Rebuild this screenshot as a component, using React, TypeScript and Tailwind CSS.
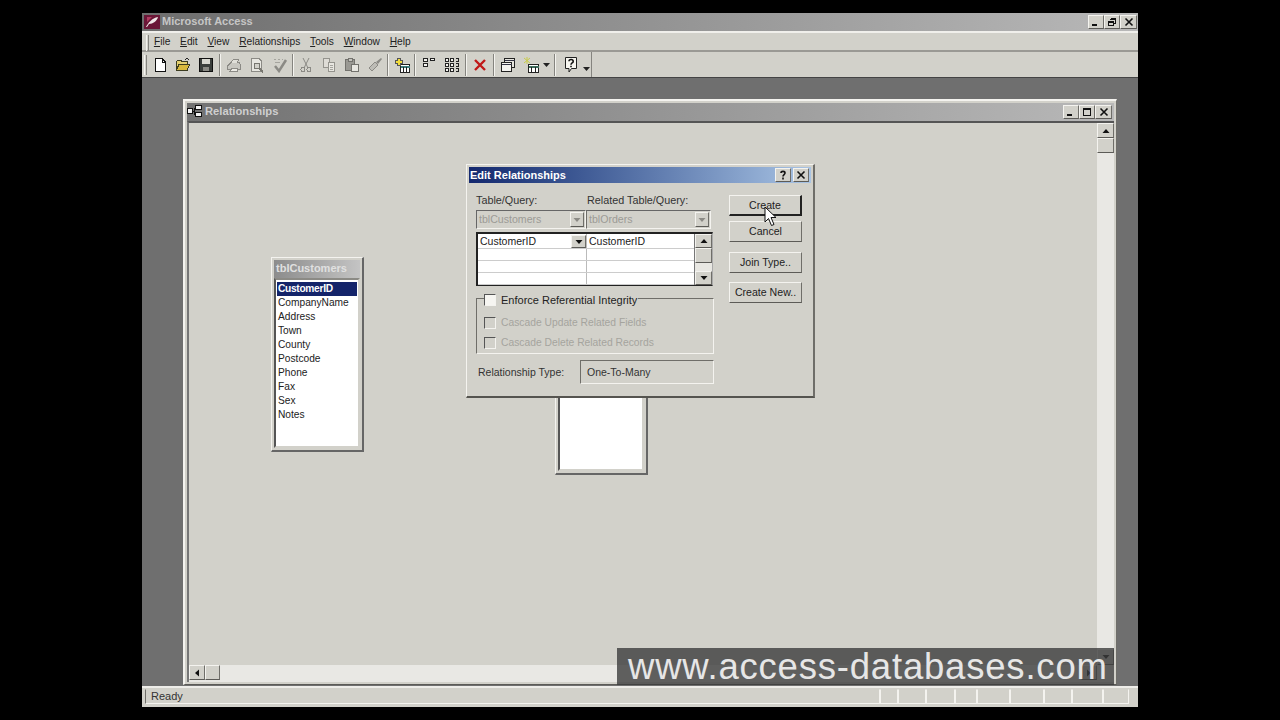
import React from "react";

const raised = "border border-t-[#f4f3ef] border-l-[#f4f3ef] border-r-[#6f6e69] border-b-[#5c5b57]";
const sunken = "border border-t-[#6f6e69] border-l-[#6f6e69] border-r-[#f4f3ef] border-b-[#f4f3ef]";
const font = "font-['Liberation_Sans',Arial,sans-serif]";

const Ico = ({ children }: { children: React.ReactNode }) => (
  <svg width="16" height="16" viewBox="0 0 16 16" shapeRendering="crispEdges">
    {children}
  </svg>
);

const Btn = ({ w = 23, children }: { w?: number; children: React.ReactNode }) => (
  <div className="flex h-full items-center justify-center shrink-0" style={{ width: w }}>
    {children}
  </div>
);

const Sep = ({ w = 5 }: { w?: number }) => (
  <div className="flex h-full items-center justify-center shrink-0" style={{ width: w }}>
    <div className="h-[22px] w-[2px] border-l border-l-[#85847f] border-r border-r-[#f4f3ef]" />
  </div>
);

const Caret = () => (
  <svg width="7" height="4" viewBox="0 0 7 4">
    <path d="M0 0H7L3.5 4Z" fill="#222" />
  </svg>
);

const NewIcon = () => (
  <Ico>
    <path d="M3 1.5H10L13.5 5V14.5H3Z" fill="#fff" stroke="#111" />
    <path d="M10 1.5V5H13.5" fill="none" stroke="#111" />
  </Ico>
);
const OpenIcon = () => (
  <Ico>
    <path d="M1.5 13.5V4.5L3 3H6L7 4.5H12V7" fill="#e4d070" stroke="#3c3c20" />
    <path d="M1.5 13.5L4 7H15L12 13.5Z" fill="#d9b93c" stroke="#3c3c20" />
    <path d="M10 3C11 1.5 13 1.5 14 3" fill="none" stroke="#222" />
  </Ico>
);
const SaveIcon = () => (
  <Ico>
    <path d="M1.5 1.5H14.5V14.5H1.5Z" fill="#3b3f3c" stroke="#111" />
    <path d="M4 2H12V7H4Z" fill="#d8d8d0" />
    <path d="M5 10H11V14H5Z" fill="#8a8a84" />
  </Ico>
);
const PrintIcon = () => (
  <Ico>
    <path d="M1.5 9L5 5.5H13L14.5 8V12.5H1.5Z" fill="#c8c7c1" stroke="#8b8a85" />
    <path d="M5 5.5L8 2H13L11 5.5" fill="#e0dfd9" stroke="#8b8a85" />
    <path d="M4 14.5L6 11H12L11 14.5Z" fill="#ecebe5" stroke="#8b8a85" />
  </Ico>
);
const PreviewIcon = () => (
  <Ico>
    <path d="M2.5 1.5H10L12.5 4V14.5H2.5Z" fill="#e8e7e1" stroke="#8b8a85" />
    <circle cx="8" cy="9" r="3" fill="#d2d1ca" stroke="#77766f" />
    <path d="M10 11.5L14 15" stroke="#77766f" strokeWidth="2" />
  </Ico>
);
const SpellIcon = () => (
  <Ico>
    <path d="M3 9L7 14L14 3" fill="none" stroke="#8b8a85" strokeWidth="2.5" shapeRendering="auto" />
    <path d="M2 2H4M6 2H8M10 2H11M3 5H8" stroke="#a5a49e" />
  </Ico>
);
const CutIcon = () => (
  <Ico>
    <path d="M5 1L9.5 10M11 1L6.5 10" stroke="#8b8a85" fill="none" shapeRendering="auto" />
    <circle cx="5" cy="12.5" r="2" fill="none" stroke="#8b8a85" />
    <circle cx="11" cy="12.5" r="2" fill="none" stroke="#8b8a85" />
  </Ico>
);
const CopyIcon = () => (
  <Ico>
    <path d="M2.5 1.5H8V10.5H2.5Z" fill="#dedcd6" stroke="#94938d" />
    <path d="M7.5 5.5H13.5V14.5H7.5Z" fill="#e8e7e1" stroke="#94938d" />
    <path d="M9 8H12M9 10H12M9 12H12" stroke="#a5a49e" />
  </Ico>
);
const PasteIcon = () => (
  <Ico>
    <path d="M1.5 2.5H10.5V13.5H1.5Z" fill="#9a9993" stroke="#73726d" />
    <path d="M4 1H8V4H4Z" fill="#c4c3bd" stroke="#73726d" />
    <path d="M7.5 7.5H14.5V14.5H7.5Z" fill="#e8e7e1" stroke="#73726d" />
  </Ico>
);
const BrushIcon = () => (
  <Ico>
    <path d="M9 5L14 1L15 2L11 7Z" fill="#8b8a85" shapeRendering="auto" />
    <path d="M2 11L8 5L11 8L5 14Z" fill="#bdbcb6" stroke="#8b8a85" shapeRendering="auto" />
  </Ico>
);
const AddTableIcon = () => (
  <Ico>
    <path d="M6.5 7.5H15.5V15.5H6.5Z" fill="#fff" stroke="#222" />
    <path d="M6.5 9.5H15.5" stroke="#3f7f7f" strokeWidth="2" />
    <path d="M9.5 10V15M12.5 10V15" stroke="#222" />
    <path d="M3 1H6V3H8V6H6V8H3V6H1V3H3Z" fill="#f2dc3c" stroke="#555" />
  </Ico>
);
const box = (x: number, y: number, w: number, h: number, key?: string) => (
  <rect key={key} x={x + 0.5} y={y + 0.5} width={w} height={h} fill="#f4f3ef" stroke="#222" />
);
const DirectIcon = () => (
  <Ico>
    {box(2, 1, 4, 3)}
    {box(2, 6, 4, 3)}
    {box(9, 1, 4, 2)}
  </Ico>
);
const AllIcon = () => (
  <Ico>
    {[1, 6, 11].flatMap((y) =>
      [1, 6].map((x) => box(x, y, 3, 3, `${x}-${y}`))
    )}
    <path d="M12 1H14V4H12M12 6H14V9H12M12 11H14V14H12" fill="none" stroke="#222" />
  </Ico>
);
const DeleteIcon = () => (
  <Ico>
    <path d="M3 3L13 13M13 3L3 13" stroke="#c01818" strokeWidth="2.4" shapeRendering="auto" />
  </Ico>
);
const DbIcon = () => (
  <Ico>
    <path d="M4.5 1.5H14.5V10.5H4.5Z" fill="#e6e5df" stroke="#222" />
    <path d="M4.5 3.5H14.5" stroke="#334" />
    <path d="M1.5 5.5H11.5V14.5H1.5Z" fill="#f4f3ef" stroke="#222" />
    <path d="M1.5 7.5H11.5" stroke="#334" />
  </Ico>
);
const NewObjIcon = () => (
  <Ico>
    <path d="M5.5 7.5H15.5V15.5H5.5Z" fill="#fff" stroke="#222" />
    <path d="M5.5 9.5H15.5" stroke="#3f6f5f" strokeWidth="2" />
    <path d="M8.5 10V15M12.5 10V15" stroke="#222" />
    <path d="M4 0V7M1 1L7 6M7 1L1 6" stroke="#c9cc4a" shapeRendering="auto" />
  </Ico>
);
const HelpIcon = () => (
  <svg width="16" height="18" viewBox="0 0 16 18">
    <path d="M2.5 1.5H13.5V12.5H8.5L6 16V12.5H2.5Z" fill="#f7f6f0" stroke="#222" />
    <path d="M6 5.2C6 3 10.2 3 10.2 5.4C10.2 7 8 7 8 8.8M8 9.8V11.2" fill="none" stroke="#111" strokeWidth="1.6" />
  </svg>
);

const CapBtn = ({ kind, w = 16 }: { kind: "min" | "max" | "restore" | "close" | "help"; w?: number }) => (
  <div className={`${raised} bg-[#d2d1ca] h-[14px] flex items-center justify-center`} style={{ width: w }}>
    <svg width="10" height="10" viewBox="0 0 10 10" shapeRendering="crispEdges">
      {kind === "min" && <path d="M1 7H6V9H1Z" fill="#111" />}
      {kind === "max" && <path d="M1.5 1.5H8.5V8.5H1.5ZM1 2H9" fill="none" stroke="#111" />}
      {kind === "restore" && <path d="M3.5 1.5H8.5V6H7M1.5 4.5H6.5V8.5H1.5ZM1 5H7M3 2H9" fill="none" stroke="#111" />}
      {kind === "close" && <path d="M1.5 1.5L8.5 8.5M8.5 1.5L1.5 8.5" fill="none" stroke="#111" strokeWidth="1.6" shapeRendering="auto" />}
      {kind === "help" && <path d="M3 3C3 0.8 7 0.8 7 3C7 4.6 5 4.6 5 6.5M5 7.5V9.5" fill="none" stroke="#111" strokeWidth="1.6" shapeRendering="auto" />}
    </svg>
  </div>
);

const Arrow = ({ dir, color = "#111" }: { dir: "up" | "down" | "left" | "right"; color?: string }) => (
  <svg width="8" height="8" viewBox="0 0 8 8">
    {dir === "up" && <path d="M4 2L7.5 6H0.5Z" fill={color} />}
    {dir === "down" && <path d="M0.5 2H7.5L4 6Z" fill={color} />}
    {dir === "left" && <path d="M6 0.5V7.5L2 4Z" fill={color} />}
    {dir === "right" && <path d="M2 0.5V7.5L6 4Z" fill={color} />}
  </svg>
);

const MenuItem = ({ u, rest }: { u: string; rest: string }) => (
  <span className="text-[10.2px] text-[#222] px-[4.9px] leading-none">
    <span className="underline">{u}</span>
    {rest}
  </span>
);

const DlgButton = ({ label, className = "" }: { label: string; className?: string }) => (
  <div className={`${raised} w-[73px] h-[21px] bg-[#d2d1ca] flex items-center justify-center text-[10.6px] text-[#222] ${className}`}>
    {label}
  </div>
);

const Check = ({ bg }: { bg: string }) => (
  <div className={`w-[12px] h-[12px] shrink-0 ${sunken} border-t-[#555] border-l-[#555] ${bg}`} />
);

const TableBox = ({ title, fields, className }: { title: string; fields: string[]; className: string }) => (
  <div className={`absolute w-[93px] ${className} ${raised} border-r-2 border-b-2 border-r-[#666] border-b-[#666] bg-[#d2d1ca] p-[2px] flex flex-col`}>
    <div className="h-[18px] bg-gradient-to-r from-[#8c8c8c] to-[#c4c4c4] text-[#e0e0e0] font-bold text-[11px] leading-[16px] pl-[2px] overflow-hidden whitespace-nowrap">
      {title}
    </div>
    <div className="flex-1 bg-white border-2 border-[#d2d1ca] border-l-[#555] border-t-[#8b8a85] pt-[2px] px-px overflow-hidden">
      {fields.map((f, i) => (
        <div
          key={f}
          className={`h-[14px] leading-[14px] text-[10.2px] pl-[1px] ${i === 0 ? "bg-[#14246a] text-white font-bold tracking-[-0.3px]" : "text-[#222]"}`}
        >
          {f}
        </div>
      ))}
    </div>
  </div>
);

const fields = ["CustomerID", "CompanyName", "Address", "Town", "County", "Postcode", "Phone", "Fax", "Sex", "Notes"];

const Dialog = () => (
  <div className={`absolute left-[277px] top-[41px] w-[349px] h-[234px] ${raised} border-r-2 border-b-2 border-r-[#5c5b57] border-b-[#55544f] bg-[#d2d1ca] p-[2px] flex flex-col`}>
    <div className="h-[16px] shrink-0 bg-gradient-to-r from-[#14286e] to-[#a9c4e4] flex items-center justify-between pl-[1px] pr-[2px]">
      <span className="text-white font-bold text-[11px]">Edit Relationships</span>
      <div className="flex items-center gap-[2px]">
        <CapBtn kind="help" />
        <CapBtn kind="close" />
      </div>
    </div>
    <div className="flex pt-[11px] pl-[7px]">
      <div className="w-[238px] flex flex-col">
        <div className="flex text-[10.8px] leading-[12px] text-[#333] h-[13px]">
          <span className="w-[111px]">Table/Query:</span>
          <span>Related Table/Query:</span>
        </div>
        <div className="flex mt-[3px] h-[19px]">
          <div className={`w-[110px] ${sunken} border-t-[#666] border-l-[#666] flex items-center justify-between text-[10.6px] text-[#9c9b96] pl-[2px] pr-px`}>
            tblCustomers
            <div className={`${raised} w-[14px] h-[15px] flex items-center justify-center`}><Arrow dir="down" color="#8b8a85" /></div>
          </div>
          <div className={`w-[125px] ${sunken} border-t-[#666] border-r-[#f4f3ef] flex items-center justify-between text-[10.6px] text-[#9c9b96] pl-[2px] pr-px`}>
            tblOrders
            <div className={`${raised} w-[14px] h-[15px] flex items-center justify-center`}><Arrow dir="down" color="#8b8a85" /></div>
          </div>
        </div>
        <div className="mt-[3px] h-[54px] w-[237px] border border-t-2 border-l-2 border-[#222] border-r-[#aaa] bg-white flex">
          <div className="flex-1 flex flex-col">
            <div className="h-[15px] shrink-0 flex border-b border-[#ccc]">
              <div className="w-[109px] border-r border-[#bbb] flex items-center justify-between text-[10.5px] text-[#222] pl-[2px] pt-[1px]">
                CustomerID
                <div className={`${raised} w-[15px] h-[13px] bg-[#d2d1ca] flex items-center justify-center`}><Arrow dir="down" /></div>
              </div>
              <div className="flex-1 text-[10.5px] text-[#222] pl-[2px] leading-[15px]">CustomerID</div>
            </div>
            {[0, 1, 2].map((i) => (
              <div key={i} className="flex-1 min-h-0 flex border-b border-[#ccc]">
                <div className="w-[109px] border-r border-[#bbb]" />
              </div>
            ))}
          </div>
          <div className="w-[18px] bg-[#e8e7e2] flex flex-col justify-between border-l border-[#777]">
            <div>
              <div className={`${raised} h-[14px] bg-[#d2d1ca] flex items-center justify-center`}><Arrow dir="up" /></div>
              <div className={`${raised} h-[15px] bg-[#d2d1ca]`} />
            </div>
            <div className={`${raised} h-[14px] bg-[#d2d1ca] flex items-center justify-center`}><Arrow dir="down" /></div>
          </div>
        </div>
        <div className={`relative mt-[12px] h-[56px] ${sunken} border-[#a09f99]`}>
          <div className="absolute left-[7px] top-[-5px] flex items-center gap-[5px] bg-[#d2d1ca] pr-[1px] text-[11px] text-[#222] leading-[12px]">
            <Check bg="bg-[#f6f5f1]" />
            Enforce Referential Integrity
          </div>
          <div className="pt-[18px] pl-[7px] flex flex-col gap-[8px] text-[10.3px] leading-[12px] text-[#a5a49e]">
            <div className="flex items-center gap-[5px]"><Check bg="bg-[#d2d1ca]" />Cascade Update Related Fields</div>
            <div className="flex items-center gap-[5px]"><Check bg="bg-[#d2d1ca]" />Cascade Delete Related Records</div>
          </div>
        </div>
        <div className="flex items-center mt-[6px] h-[24px] text-[10.5px] text-[#333]">
          <span className="w-[104px] pl-[2px] pt-[2px]">Relationship Type:</span>
          <div className={`${sunken} w-[134px] h-full flex items-center pl-[6px] pt-[2px]`}>One-To-Many</div>
        </div>
      </div>
      <div className="ml-[15px] flex flex-col pt-[1px]">
        <DlgButton label="Create" className="border-r-2 border-b-2 border-t-[#333] border-l-[#333] border-r-[#222] border-b-[#222] pt-[2px]" />
        <DlgButton label="Cancel" className="mt-[5px]" />
        <DlgButton label="Join Type.." className="mt-[10px]" />
        <DlgButton label="Create New.." className="mt-[9px]" />
      </div>
    </div>
  </div>
);

const Cursor = () => (
  <svg className="absolute left-[575px] top-[83px]" width="14" height="21" viewBox="0 0 14 21">
    <path d="M1 1V16L4.5 12.5L7.5 19.5L10 18.5L7 11.5H12Z" fill="#fff" stroke="#111" />
  </svg>
);

export default function App() {
  return (
    <div className={`w-[1280px] h-[720px] bg-black pt-[13px] pl-[142px] overflow-hidden relative ${font}`}>
      <div className="w-[996px] h-[694px] bg-[#d2d1ca] flex flex-col">
        {/* app title */}
        <div className="h-[18px] shrink-0 bg-gradient-to-r from-[#6e6e6e] to-[#b8b8b8] flex items-center justify-between pl-[2px] pr-px pb-[1px]">
          <div className="flex items-center gap-[2px]">
            <svg width="16" height="14" viewBox="0 0 16 14">
              <rect width="16" height="14" fill="#6a1636" />
              <path d="M2 12C4 8 8 3 14 2C13 6 9 9 5 9L3 12Z" fill="#f0e8e8" />
              <path d="M3 2H8L3 7Z" fill="#b03a60" />
            </svg>
            <span className="text-[#c6c6c6] font-bold text-[11px]">Microsoft Access</span>
          </div>
          <div className="flex items-center">
            <CapBtn kind="min" />
            <CapBtn kind="restore" />
            <CapBtn kind="close" w={17} />
          </div>
        </div>
        {/* menu */}
        <div className="h-[21px] shrink-0 border-t-2 border-t-[#f0efeb] border-b-2 border-b-[#9a9994] flex items-center pl-[4px] pt-[2px]">
          <div className="w-[3px] h-[16px] border-l border-l-[#f4f3ef] border-r border-r-[#85847f]" />
          <MenuItem u="F" rest="ile" />
          <MenuItem u="E" rest="dit" />
          <MenuItem u="V" rest="iew" />
          <MenuItem u="R" rest="elationships" />
          <MenuItem u="T" rest="ools" />
          <MenuItem u="W" rest="indow" />
          <MenuItem u="H" rest="elp" />
        </div>
        {/* toolbar */}
        <div className="h-[25px] shrink-0 flex items-center pl-[1px]">
          <div className="flex items-center h-full w-[449px] border-r border-r-[#85847f] shrink-0">
            <div className="w-[5px] flex justify-center shrink-0">
              <div className="w-[3px] h-[20px] border-l border-l-[#f4f3ef] border-r border-r-[#85847f]" />
            </div>
            <Btn><NewIcon /></Btn>
            <Btn><OpenIcon /></Btn>
            <Btn><SaveIcon /></Btn>
            <Sep />
            <Btn><PrintIcon /></Btn>
            <Btn><PreviewIcon /></Btn>
            <Btn><SpellIcon /></Btn>
            <Sep w={3} />
            <Btn><CutIcon /></Btn>
            <Btn><CopyIcon /></Btn>
            <Btn><PasteIcon /></Btn>
            <Btn><BrushIcon /></Btn>
            <Sep w={4} />
            <Btn><AddTableIcon /></Btn>
            <Sep w={4} />
            <Btn><DirectIcon /></Btn>
            <Btn><AllIcon /></Btn>
            <Sep w={5} />
            <Btn><DeleteIcon /></Btn>
            <Sep />
            <Btn><DbIcon /></Btn>
            <Btn><NewObjIcon /></Btn>
            <Btn w={9}><Caret /></Btn>
            <Sep w={8} />
            <Btn><HelpIcon /></Btn>
            <Btn w={9}><div className="pt-[8px]"><Caret /></div></Btn>
          </div>
        </div>
        {/* mdi area */}
        <div className="flex-1 min-h-0 bg-[#6f6f6f] border-t border-t-[#444] pt-[21px] pl-[41px]">
          <div className={`w-[934px] h-[586px] bg-[#d2d1ca] ${raised} border-t-2 border-l-2 p-[2px] flex flex-col`}>
            <div className="h-[18px] shrink-0 bg-gradient-to-r from-[#727272] to-[#b8b8b8] flex items-center justify-between pr-[2px]">
              <div className="flex items-center gap-[2px] pb-[2px]">
                <svg width="16" height="14" viewBox="0 0 16 14" shapeRendering="crispEdges">
                  <path d="M0.5 4.5H5.5V9.5H0.5ZM8.5 1.5H14.5V5.5H8.5ZM8.5 8.5H14.5V12.5H8.5Z" fill="#f4f4f4" stroke="#111" />
                  <path d="M5.5 7H7.5M7.5 3.5V10.5H8.5" fill="none" stroke="#111" />
                </svg>
                <span className="text-[#cfcfcf] font-bold text-[11.2px]">Relationships</span>
              </div>
              <div className="flex items-center">
                <CapBtn kind="min" />
                <CapBtn kind="max" />
                <CapBtn kind="close" w={17} />
              </div>
            </div>
            <div className="flex-1 min-h-0 border-t-2 border-l-2 border-t-[#555] border-l-[#777] flex flex-col">
              <div className="flex-1 min-h-0 flex">
                <div className="flex-1 relative">
                  <TableBox title="tblCustomers" fields={fields} className="left-[82px] top-[134px] h-[195px]" />
                  <TableBox title="tblOrders" fields={["OrderID"]} className="left-[366px] top-[134px] h-[218px]" />
                  <Dialog />
                  <Cursor />
                </div>
                <div className="w-[17px] shrink-0 bg-[#e9e8e4] flex flex-col justify-between">
                  <div>
                    <div className={`${raised} h-[15px] bg-[#d2d1ca] flex items-center justify-center`}><Arrow dir="up" /></div>
                    <div className={`${raised} h-[15px] bg-[#d2d1ca]`} />
                  </div>
                  <div className={`${raised} h-[16px] bg-[#d2d1ca] flex items-center justify-center`}><Arrow dir="down" /></div>
                </div>
              </div>
              <div className="h-[17px] shrink-0 bg-[#e9e8e4] flex justify-between items-start">
                <div className="flex h-[15px]">
                  <div className={`${raised} w-[16px] bg-[#d2d1ca] flex items-center justify-center`}><Arrow dir="left" /></div>
                  <div className={`${raised} w-[15px] bg-[#d2d1ca]`} />
                </div>
                <div className={`${raised} w-[16px] h-[15px] bg-[#d2d1ca] flex items-center justify-center mr-[17px]`}><Arrow dir="right" /></div>
              </div>
            </div>
          </div>
        </div>
        {/* status bar */}
        <div className="h-[21px] shrink-0 border-t-2 border-t-[#eeede9] flex items-center text-[11px] text-[#333] pl-[3px] pb-[2px]">
          <div className={`${sunken} h-[15px] w-[735px] flex items-center pl-[5px] border-t-[#d2d1ca] border-r-[#f4f3ef]`}>Ready</div>
          {[18, 28, 29, 22, 33, 34, 28, 31, 26].map((w, i) => (
            <div key={i} className={`${sunken} h-[15px] border-t-[#d2d1ca] border-l-[#f4f3ef] border-r-[#f4f3ef]`} style={{ width: w }} />
          ))}
        </div>
      </div>
      {/* watermark */}
      <div className="absolute left-[617px] top-[648px] w-[497px] h-[37px] bg-[#3c3c3c]/80 flex items-center pl-[11px] pt-[2px] text-[#e6e6e6] text-[36.5px] tracking-[0.8px] leading-none whitespace-nowrap">
        www.access-databases.com
      </div>
    </div>
  );
}
